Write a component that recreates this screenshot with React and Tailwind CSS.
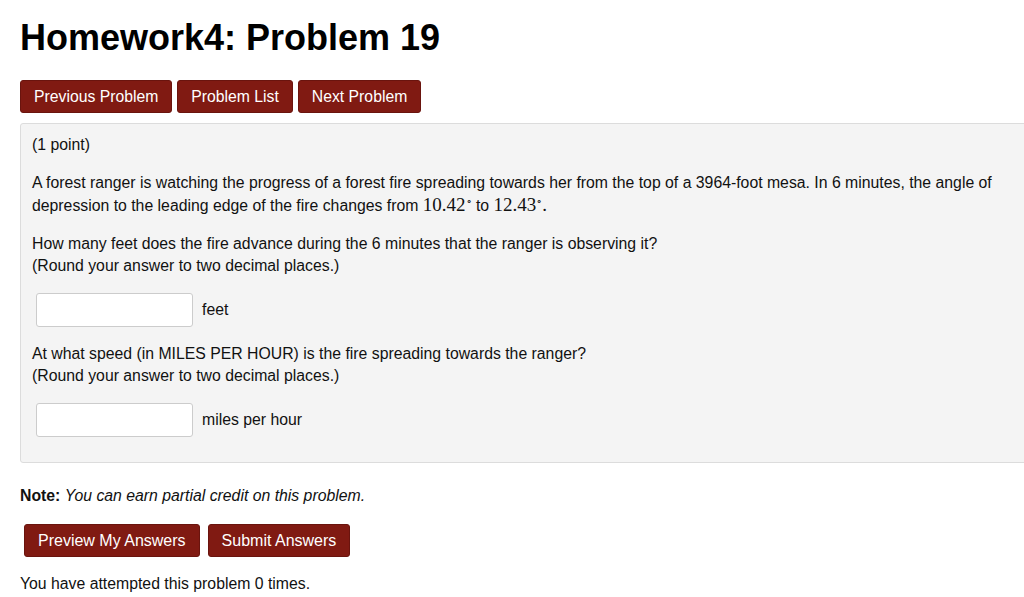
import React from "react";

function RedButton({ children, size = "text-[15.75px]" }) {
  return (
    <button
      type="button"
      className={
        "h-[33px] rounded-[3px] border border-[#6a140e] bg-[#801a12] px-[13px] text-white " + size
      }
    >
      {children}
    </button>
  );
}

function AnswerInput({ unit }) {
  return (
    <div className="flex items-center">
      <input
        type="text"
        className="h-[34px] w-[157px] rounded-[3px] border border-[#cccccc] bg-white outline-none"
      />
      <span className="ml-[9px]">{unit}</span>
    </div>
  );
}

export default function App() {
  return (
    <div className="min-h-screen bg-white text-[15.8px] text-[#111] font-['Liberation_Sans',Arial,sans-serif] overflow-hidden">
      <div className="pl-[20px]">
        {/* Title */}
        <h1 className="pt-[14px] text-[36px] font-bold leading-[48px] text-black">
          Homework4: Problem 19
        </h1>

        {/* Nav buttons */}
        <div className="mt-[18px] flex gap-[5px]">
          <RedButton>Previous Problem</RedButton>
          <RedButton>Problem List</RedButton>
          <RedButton>Next Problem</RedButton>
        </div>

        {/* Problem panel */}
        <div className="mt-[10px] w-[1020px] rounded-l-[3px] border border-[#dcdcdc] bg-[#f4f4f4] pl-[11px] pt-[10px] pb-[25px] leading-[22px]">
          <p>(1 point)</p>

          <p className="mt-[16px]">
            A forest ranger is watching the progress of a forest fire spreading towards her from the top of a 3964-foot mesa. In 6 minutes, the angle of
            <br />
            depression to the leading edge of the fire changes from{" "}
            <span className="font-['Liberation_Serif',serif] text-[19px]">10.42<sup className="text-[10px] -top-[7px]">∘</sup></span>{" "}
            to{" "}
            <span className="font-['Liberation_Serif',serif] text-[19px]">12.43<sup className="text-[10px] -top-[7px]">∘</sup>.</span>
          </p>

          <p className="mt-[16px]">
            How many feet does the fire advance during the 6 minutes that the ranger is observing it?
            <br />
            (Round your answer to two decimal places.)
          </p>

          <div className="mt-[16px] pl-[4px]">
            <AnswerInput unit="feet" />
          </div>

          <p className="mt-[16px]">
            At what speed (in MILES PER HOUR) is the fire spreading towards the ranger?
            <br />
            (Round your answer to two decimal places.)
          </p>

          <div className="mt-[16px] pl-[4px]">
            <AnswerInput unit="miles per hour" />
          </div>
        </div>

        {/* Note */}
        <p className="mt-[22px] leading-[22px]">
          <span className="font-bold">Note:</span>{" "}
          <i>You can earn partial credit on this problem.</i>
        </p>

        <div className="mt-[17px] flex gap-[8px] pl-[4px]">
          <RedButton size="text-[16px]">Preview My Answers</RedButton>
          <RedButton size="text-[16px]">Submit Answers</RedButton>
        </div>

        <p className="mt-[16px] leading-[22px]">You have attempted this problem 0 times.</p>
      </div>
    </div>
  );
}
